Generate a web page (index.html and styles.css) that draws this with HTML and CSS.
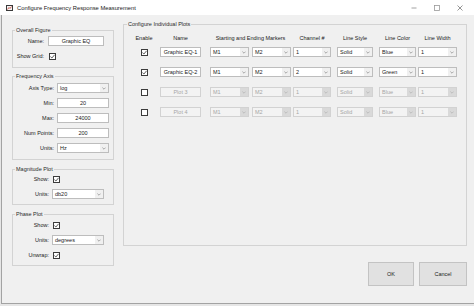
FILE: index.html
```html
<!DOCTYPE html>
<html lang="en">
<head>
<meta charset="utf-8">
<title>Configure Frequency Response Measurement</title>
<link rel="stylesheet" href="styles.css">
</head>
<body>
<div class="window">
  <div class="titlebar">
    <svg class="app-icon" width="7" height="6" viewBox="0 0 7 6"><rect x="0" y="0" width="7" height="6" fill="#3a3a3a"/><rect x="1" y="1" width="5" height="4" fill="#f4f4f4"/><polyline points="1.5,4.5 3,2.5 4,3.5 5.5,1.5" fill="none" stroke="#c0392b" stroke-width="0.8"/></svg>
    <span class="title">Configure Frequency Response Measurement</span>
    <div class="controls">
      <span class="ctl"><svg width="6" height="6" viewBox="0 0 6 6"><line x1="0.5" y1="3" x2="5.5" y2="3" stroke="#8a8a8a" stroke-width="0.8"/></svg></span>
      <span class="ctl"><svg width="6" height="6" viewBox="0 0 6 6"><rect x="0.5" y="0.5" width="5" height="5" fill="none" stroke="#9a9a9a" stroke-width="0.8"/></svg></span>
      <span class="ctl"><svg width="6" height="6" viewBox="0 0 6 6"><path d="M0.5 0.5 L5.5 5.5 M5.5 0.5 L0.5 5.5" stroke="#7a7a7a" stroke-width="0.8"/></svg></span>
    </div>
  </div>
  <div class="client">
    <div class="main">
      <div class="left">
        <fieldset class="fs fs1">
          <legend>Overall Figure</legend>
          <div class="form">
            <label>Name:</label><div class="edit">Graphic EQ</div>
            <label>Show Grid:</label><div class="cb on"><svg viewBox="0 0 7 7"><polyline points="1.4,3.6 2.9,5 5.6,1.8" fill="none" stroke="#333" stroke-width="0.8"/></svg></div>
          </div>
        </fieldset>
        <fieldset class="fs fs2">
          <legend>Frequency Axis</legend>
          <div class="form">
            <label>Axis Type:</label><div class="dd"><span>log</span><i><svg viewBox="0 0 4 3"><polyline points="0.4,0.6 2,2.2 3.6,0.6" fill="none" stroke="#777" stroke-width="0.6"/></svg></i></div>
            <label>Min:</label><div class="edit">20</div>
            <label>Max:</label><div class="edit">24000</div>
            <label>Num Points:</label><div class="edit">200</div>
            <label>Units:</label><div class="dd"><span>Hz</span><i><svg viewBox="0 0 4 3"><polyline points="0.4,0.6 2,2.2 3.6,0.6" fill="none" stroke="#777" stroke-width="0.6"/></svg></i></div>
          </div>
        </fieldset>
        <fieldset class="fs fs3">
          <legend>Magnitude Plot</legend>
          <div class="form">
            <label>Show:</label><div class="cb on"><svg viewBox="0 0 7 7"><polyline points="1.4,3.6 2.9,5 5.6,1.8" fill="none" stroke="#333" stroke-width="0.8"/></svg></div>
            <label>Units:</label><div class="dd"><span>db20</span><i><svg viewBox="0 0 4 3"><polyline points="0.4,0.6 2,2.2 3.6,0.6" fill="none" stroke="#777" stroke-width="0.6"/></svg></i></div>
          </div>
        </fieldset>
        <fieldset class="fs fs4">
          <legend>Phase Plot</legend>
          <div class="form">
            <label>Show:</label><div class="cb on"><svg viewBox="0 0 7 7"><polyline points="1.4,3.6 2.9,5 5.6,1.8" fill="none" stroke="#333" stroke-width="0.8"/></svg></div>
            <label>Units:</label><div class="dd"><span>degrees</span><i><svg viewBox="0 0 4 3"><polyline points="0.4,0.6 2,2.2 3.6,0.6" fill="none" stroke="#777" stroke-width="0.6"/></svg></i></div>
            <label>Unwrap:</label><div class="cb on"><svg viewBox="0 0 7 7"><polyline points="1.4,3.6 2.9,5 5.6,1.8" fill="none" stroke="#333" stroke-width="0.8"/></svg></div>
          </div>
        </fieldset>
      </div>
      <div class="right">
        <fieldset class="fs plots">
          <legend>Configure Individual Plots</legend>
          <div class="hdr">
            <span class="c-en">Enable</span>
            <span class="c-name">Name</span>
            <span class="c-mk">Starting and Ending Markers</span>
            <span class="c-ch">Channel #</span>
            <span class="c-st">Line Style</span>
            <span class="c-co">Line Color</span>
            <span class="c-wi">Line Width</span>
          </div>
          <div class="rows">
            <div class="row">
              <div class="c-en"><div class="cb on"><svg viewBox="0 0 7 7"><polyline points="1.4,3.6 2.9,5 5.6,1.8" fill="none" stroke="#333" stroke-width="0.8"/></svg></div></div>
              <div class="c-name edit">Graphic EQ-1</div>
              <div class="c-m1 dd"><span>M1</span><i><svg viewBox="0 0 4 3"><polyline points="0.4,0.6 2,2.2 3.6,0.6" fill="none" stroke="#777" stroke-width="0.6"/></svg></i></div>
              <div class="c-m2 dd"><span>M2</span><i><svg viewBox="0 0 4 3"><polyline points="0.4,0.6 2,2.2 3.6,0.6" fill="none" stroke="#777" stroke-width="0.6"/></svg></i></div>
              <div class="c-ch dd"><span>1</span><i><svg viewBox="0 0 4 3"><polyline points="0.4,0.6 2,2.2 3.6,0.6" fill="none" stroke="#777" stroke-width="0.6"/></svg></i></div>
              <div class="c-st dd"><span>Solid</span><i><svg viewBox="0 0 4 3"><polyline points="0.4,0.6 2,2.2 3.6,0.6" fill="none" stroke="#777" stroke-width="0.6"/></svg></i></div>
              <div class="c-co dd"><span>Blue</span><i><svg viewBox="0 0 4 3"><polyline points="0.4,0.6 2,2.2 3.6,0.6" fill="none" stroke="#777" stroke-width="0.6"/></svg></i></div>
              <div class="c-wi dd"><span>1</span><i><svg viewBox="0 0 4 3"><polyline points="0.4,0.6 2,2.2 3.6,0.6" fill="none" stroke="#777" stroke-width="0.6"/></svg></i></div>
            </div>
            <div class="row">
              <div class="c-en"><div class="cb on"><svg viewBox="0 0 7 7"><polyline points="1.4,3.6 2.9,5 5.6,1.8" fill="none" stroke="#333" stroke-width="0.8"/></svg></div></div>
              <div class="c-name edit">Graphic EQ-2</div>
              <div class="c-m1 dd"><span>M1</span><i><svg viewBox="0 0 4 3"><polyline points="0.4,0.6 2,2.2 3.6,0.6" fill="none" stroke="#777" stroke-width="0.6"/></svg></i></div>
              <div class="c-m2 dd"><span>M2</span><i><svg viewBox="0 0 4 3"><polyline points="0.4,0.6 2,2.2 3.6,0.6" fill="none" stroke="#777" stroke-width="0.6"/></svg></i></div>
              <div class="c-ch dd"><span>2</span><i><svg viewBox="0 0 4 3"><polyline points="0.4,0.6 2,2.2 3.6,0.6" fill="none" stroke="#777" stroke-width="0.6"/></svg></i></div>
              <div class="c-st dd"><span>Solid</span><i><svg viewBox="0 0 4 3"><polyline points="0.4,0.6 2,2.2 3.6,0.6" fill="none" stroke="#777" stroke-width="0.6"/></svg></i></div>
              <div class="c-co dd"><span>Green</span><i><svg viewBox="0 0 4 3"><polyline points="0.4,0.6 2,2.2 3.6,0.6" fill="none" stroke="#777" stroke-width="0.6"/></svg></i></div>
              <div class="c-wi dd"><span>1</span><i><svg viewBox="0 0 4 3"><polyline points="0.4,0.6 2,2.2 3.6,0.6" fill="none" stroke="#777" stroke-width="0.6"/></svg></i></div>
            </div>
            <div class="row dis">
              <div class="c-en"><div class="cb"></div></div>
              <div class="c-name edit">Plot 3</div>
              <div class="c-m1 dd"><span>M1</span><i><svg viewBox="0 0 4 3"><polyline points="0.4,0.6 2,2.2 3.6,0.6" fill="none" stroke="#aaa" stroke-width="0.6"/></svg></i></div>
              <div class="c-m2 dd"><span>M2</span><i><svg viewBox="0 0 4 3"><polyline points="0.4,0.6 2,2.2 3.6,0.6" fill="none" stroke="#aaa" stroke-width="0.6"/></svg></i></div>
              <div class="c-ch dd"><span>1</span><i><svg viewBox="0 0 4 3"><polyline points="0.4,0.6 2,2.2 3.6,0.6" fill="none" stroke="#aaa" stroke-width="0.6"/></svg></i></div>
              <div class="c-st dd"><span>Solid</span><i><svg viewBox="0 0 4 3"><polyline points="0.4,0.6 2,2.2 3.6,0.6" fill="none" stroke="#aaa" stroke-width="0.6"/></svg></i></div>
              <div class="c-co dd"><span>Blue</span><i><svg viewBox="0 0 4 3"><polyline points="0.4,0.6 2,2.2 3.6,0.6" fill="none" stroke="#aaa" stroke-width="0.6"/></svg></i></div>
              <div class="c-wi dd"><span>1</span><i><svg viewBox="0 0 4 3"><polyline points="0.4,0.6 2,2.2 3.6,0.6" fill="none" stroke="#aaa" stroke-width="0.6"/></svg></i></div>
            </div>
            <div class="row dis">
              <div class="c-en"><div class="cb"></div></div>
              <div class="c-name edit">Plot 4</div>
              <div class="c-m1 dd"><span>M1</span><i><svg viewBox="0 0 4 3"><polyline points="0.4,0.6 2,2.2 3.6,0.6" fill="none" stroke="#aaa" stroke-width="0.6"/></svg></i></div>
              <div class="c-m2 dd"><span>M2</span><i><svg viewBox="0 0 4 3"><polyline points="0.4,0.6 2,2.2 3.6,0.6" fill="none" stroke="#aaa" stroke-width="0.6"/></svg></i></div>
              <div class="c-ch dd"><span>1</span><i><svg viewBox="0 0 4 3"><polyline points="0.4,0.6 2,2.2 3.6,0.6" fill="none" stroke="#aaa" stroke-width="0.6"/></svg></i></div>
              <div class="c-st dd"><span>Solid</span><i><svg viewBox="0 0 4 3"><polyline points="0.4,0.6 2,2.2 3.6,0.6" fill="none" stroke="#aaa" stroke-width="0.6"/></svg></i></div>
              <div class="c-co dd"><span>Blue</span><i><svg viewBox="0 0 4 3"><polyline points="0.4,0.6 2,2.2 3.6,0.6" fill="none" stroke="#aaa" stroke-width="0.6"/></svg></i></div>
              <div class="c-wi dd"><span>1</span><i><svg viewBox="0 0 4 3"><polyline points="0.4,0.6 2,2.2 3.6,0.6" fill="none" stroke="#aaa" stroke-width="0.6"/></svg></i></div>
            </div>
          </div>
        </fieldset>
        <div class="buttons">
          <button class="btn ok">OK</button>
          <button class="btn cancel">Cancel</button>
        </div>
      </div>
    </div>
  </div>
</div>
</body>
</html>
```
FILE: styles.css
```css
* { box-sizing: border-box; }
html, body { margin: 0; padding: 0; }
body {
  width: 474px;
  height: 306px;
  overflow: hidden;
  background: #e6e6e6;
  font-family: "Liberation Sans", Arial, sans-serif;
  font-size: 5.5px;
  color: #222;
}
.window { width: 474px; }
.titlebar {
  height: 15px;
  background: #ffffff;
  display: flex;
  align-items: center;
  padding-left: 6px;
  padding-right: 3px;
}
.app-icon { width: 7px; height: 6px; margin-right: 4px; flex: none; }
.title {
  font-family: "Liberation Sans", Arial, sans-serif;
  font-size: 5.8px;
  color: #1a1a1a;
  white-space: nowrap;
}
.controls { margin-left: auto; display: flex; }
.ctl { width: 23px; height: 15px; display: flex; align-items: center; justify-content: center; }
.ctl svg { width: 6px; height: 6px; display: block; }

.client {
  margin-left: 1px;
  border-left: 1px solid #a3a3a3;
  border-bottom: 1px solid #a3a3a3;
  height: 289px;
  background: #f0f0f0;
  padding: 5px 7px 0 10px;
}
.main { display: flex; gap: 9px; align-items: flex-start; }
.left { width: 102px; padding-top: 6px; display: flex; flex-direction: column; }
.right { width: 344px; display: flex; flex-direction: column; }

.fs {
  margin: 0;
  padding: 0;
  border: 1px solid #d3d3d3;
  min-width: 0;
}
.fs legend {
  font-size: 5.5px;
  line-height: 9px;
  padding: 0 1px;
  margin-left: 2px;
  color: #2a2a2a;
}
.form {
  display: grid;
  grid-auto-rows: 10px;
  row-gap: 5px;
  align-items: center;
}
.form label { text-align: right; line-height: 10px; white-space: nowrap; }
.form .cb { margin-left: 1px; }

.fs1 { padding: 1px 0 6px; }
.fs1 .form { grid-template-columns: 31px 56px; column-gap: 4px; }
.fs2 { margin-top: 4px; padding: 2px 0 6px; }
.fs2 .form { grid-template-columns: 41px 52px; column-gap: 3px; }
.fs3 { margin-top: 5px; padding: 0 0 5px; }
.fs4 { margin-top: 5px; padding: 1px 0 5px; }
.fs3 .form, .fs4 .form { grid-template-columns: 36px 52px; column-gap: 3px; }

.edit {
  height: 10px;
  background: #ffffff;
  border: 1px solid #bdbdbd;
  text-align: center;
  line-height: 8px;
  white-space: nowrap;
  overflow: hidden;
}
.dd {
  height: 10px;
  display: flex;
  background: #ffffff;
  border: 1px solid #bdbdbd;
}
.dd span { flex: 1; padding-left: 2px; line-height: 8px; white-space: nowrap; overflow: hidden; }
.dd i {
  width: 8px;
  display: flex;
  align-items: center;
  justify-content: center;
  background: #f0f0f0;
}
.dd i svg { width: 4px; height: 3px; display: block; }

.cb {
  width: 7px;
  height: 7px;
  background: #ffffff;
  border: 1px solid #3c3c3c;
}
.cb svg { width: 7px; height: 7px; display: block; margin: -1px 0 0 -1px; }

.plots { width: 344px; height: 226px; padding: 5px 0 0; }
.plots legend { margin-left: 3px; }
.hdr { display: flex; height: 8px; line-height: 8px; margin-bottom: 5px; text-align: center; white-space: nowrap; }
.hdr span { display: block; }
.rows { display: flex; flex-direction: column; gap: 10px; }
.row { display: flex; height: 10px; align-items: center; }

.c-en { margin-left: 4px; width: 32px; display: flex; justify-content: center; }
.hdr .c-en { display: block; }
.c-name { width: 41px; }
.c-mk { margin-left: 9px; width: 81px; }
.c-m1 { margin-left: 9px; width: 39px; }
.c-m2 { margin-left: 3px; width: 39px; }
.c-ch { margin-left: 2px; width: 38px; }
.c-st { margin-left: 6px; width: 36px; }
.c-co { margin-left: 6px; width: 37px; }
.c-wi { margin-left: 2px; width: 39px; }

.dis .edit, .dis .dd { background: #f3f3f3; border-color: #d2d2d2; color: #a6a6a6; }
.dis .dd i { background: #d9d9d9; }

.buttons { display: flex; justify-content: flex-end; gap: 5px; margin-top: 16px; }
.btn {
  height: 24px;
  background: #e1e1e1;
  border: 1px solid #c3c3c3;
  font-family: "Liberation Sans", Arial, sans-serif;
  font-size: 5.5px;
  color: #222;
  padding: 0;
  margin: 0;
}
.ok { width: 46px; }
.cancel { width: 48px; }
```
